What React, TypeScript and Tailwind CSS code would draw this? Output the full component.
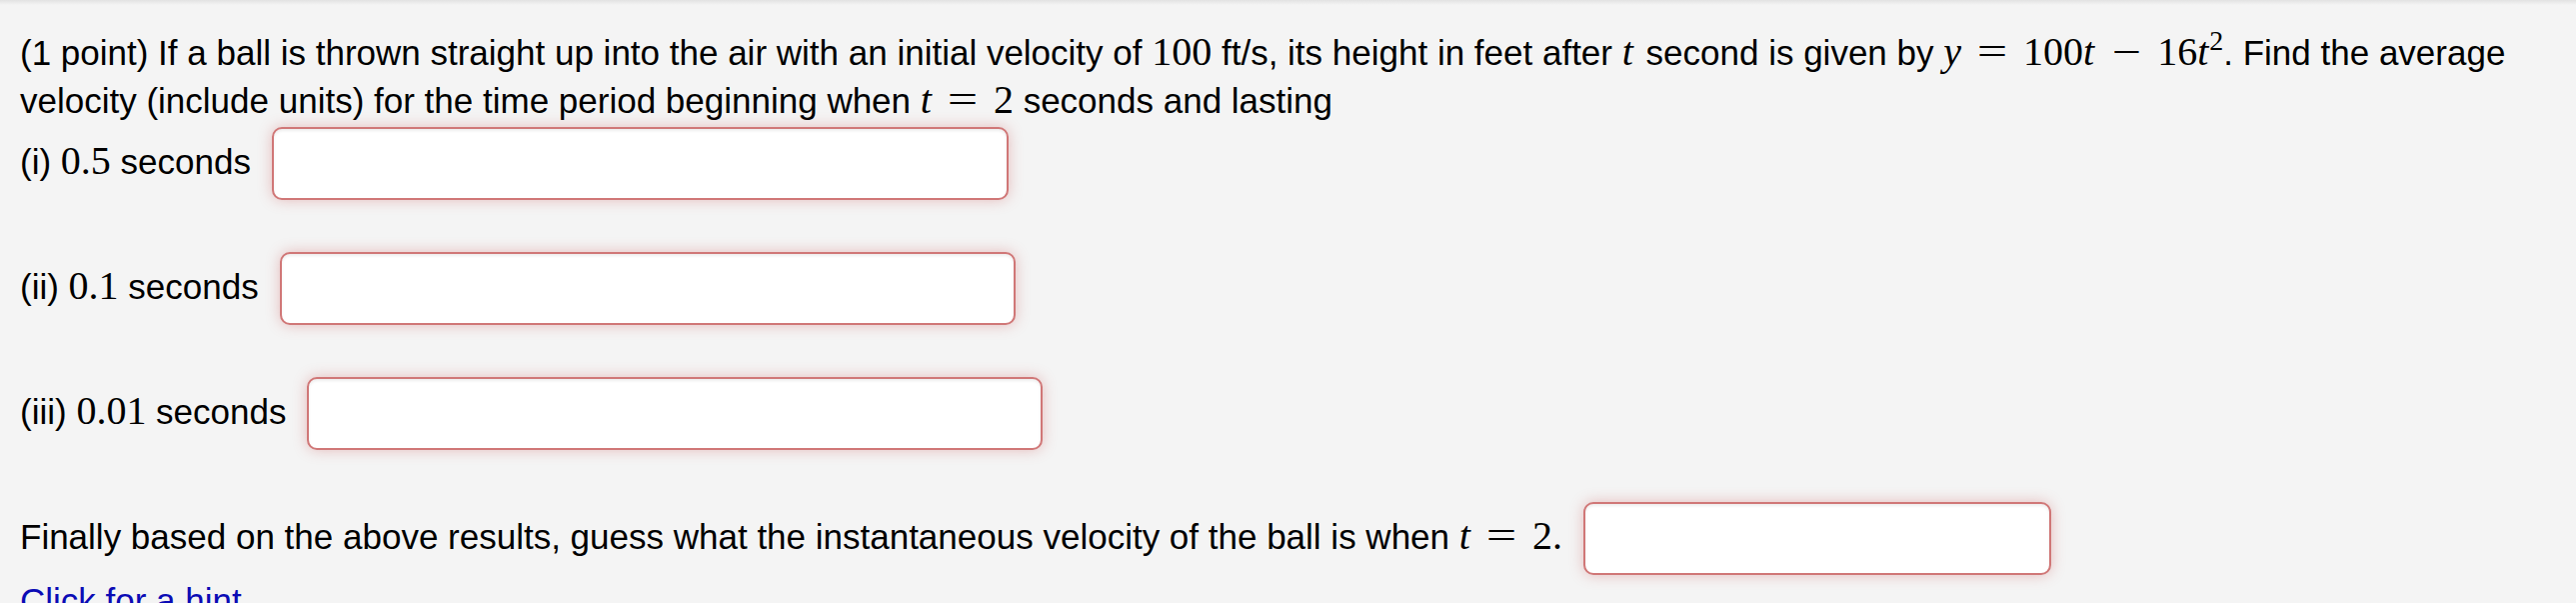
import type { ReactNode } from "react";

// math bits are set in a serif face, a bit larger than the body text
function M({ children }: { children: ReactNode }) {
  return <span className="font-['Liberation_Serif',serif] text-[40px] leading-none">{children}</span>;
}

function V({ children }: { children: ReactNode }) {
  return (
    <span className="font-['Liberation_Serif',serif] text-[40px] leading-none italic pr-[3px]">{children}</span>
  );
}

function Eq() {
  return (
    <span className="ml-[13px] mr-[16px] inline-block w-[30px] scale-x-[1.35] text-center font-['Liberation_Serif',serif] text-[40px] leading-none">
      =
    </span>
  );
}

function Minus() {
  return (
    <span className="ml-[16px] mr-[17px] inline-block w-[27px] scale-x-[1.3] text-center font-['Liberation_Serif',serif] text-[40px] leading-none">
      −
    </span>
  );
}

function AnswerBox({ className }: { className: string }) {
  return (
    <input
      type="text"
      className={
        "ml-[21px] h-[73px] shrink-0 rounded-[10px] border-[2.5px] border-[#d07777] bg-white px-[10px] outline-none shadow-[inset_0_2px_3px_rgba(0,0,0,0.07),0_0_14px_rgba(205,95,95,0.38)] " +
        className
      }
    />
  );
}

function Row({ label, width }: { label: ReactNode; width: string }) {
  return (
    <div className="flex items-start">
      <div className="mt-[10px] h-[49px] whitespace-nowrap leading-[49px]">{label}</div>
      <AnswerBox className={width} />
    </div>
  );
}

export default function App() {
  return (
    <div className="h-screen overflow-hidden bg-[#f4f4f4] font-['Liberation_Sans',Arial,sans-serif] text-[35px] text-black">
      <div className="h-[5px] bg-gradient-to-b from-[#e2e2e2] to-[#f4f4f4]" />
      <div className="pl-[20px] pt-[22px]">
        <div className="h-[49px] whitespace-nowrap leading-[49px]">
          (1 point) If a ball is thrown straight up into the air with an initial velocity of <M>100</M> ft/s, its
          height in feet after <V>t</V> second is given by <V>y</V>
          <Eq />
          <M>100</M>
          <V>t</V>
          <Minus />
          <M>16</M>
          <span className="font-['Liberation_Serif',serif] text-[40px] leading-none italic pr-[1px]">t</span>
          <span className="font-['Liberation_Serif',serif] text-[28px] leading-none align-[15px]">2</span>. Find the
          average
        </div>
        <div className="h-[49px] whitespace-nowrap leading-[49px]">
          velocity (include units) for the time period beginning when <V>t</V>
          <Eq />
          <M>2</M> seconds and lasting
        </div>

        <div className="mt-[2px] flex flex-col gap-[52px]">
          <Row
            label={
              <>
                (i) <M>0.5</M> seconds
              </>
            }
            width="w-[737px]"
          />
          <Row
            label={
              <>
                (ii) <M>0.1</M> seconds
              </>
            }
            width="w-[736px]"
          />
          <Row
            label={
              <>
                (iii) <M>0.01</M> seconds
              </>
            }
            width="w-[736px]"
          />
          <Row
            label={
              <>
                Finally based on the above results, guess what the instantaneous velocity of the ball is when{" "}
                <V>t</V>
                <Eq />
                <M>2.</M>
              </>
            }
            width="w-[468px]"
          />
        </div>

        <a href="#" className="mt-[1px] block leading-[49px] text-[#0b0bb5]">
          Click for a hint
        </a>
      </div>
    </div>
  );
}
